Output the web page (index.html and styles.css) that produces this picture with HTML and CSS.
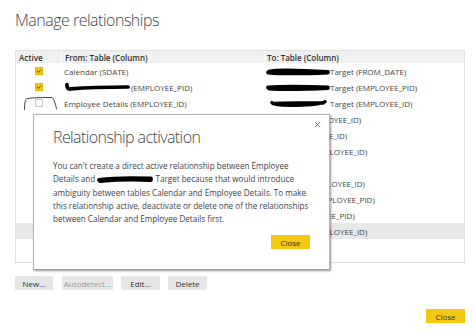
FILE: index.html
```html
<!DOCTYPE html>
<html>
<head>
<meta charset="utf-8">
<link rel="stylesheet" href="styles.css">
</head>
<body>
<div class="page">
  <h1 class="title">Manage relationships</h1>
  <div class="table">
    <div class="row head">
      <div class="c-active">Active</div>
      <div class="c-from">From: Table (Column)</div>
      <div class="c-to">To: Table (Column)</div>
    </div>
    <div class="row">
      <div class="c-active"><span class="cb on"><svg viewBox="0 0 8 8"><path d="M1.6 4.2 L3.3 5.8 L6.4 2.2" /></svg></span></div>
      <div class="c-from">Calendar (SDATE)</div>
      <div class="c-to"><span class="redact r-to"><svg viewBox="0 0 64 8"><path d="M3 4 C12 2 30 2.5 62 4.5 M2 5 C20 6.5 40 6 62 5" /></svg></span>Target (FROM_DATE)</div>
    </div>
    <div class="row">
      <div class="c-active"><span class="cb on"><svg viewBox="0 0 8 8"><path d="M1.6 4.2 L3.3 5.8 L6.4 2.2" /></svg></span></div>
      <div class="c-from"><span class="redact r-from"><svg viewBox="0 0 68 10"><path d="M3 2.5 C3 6 4 7.5 7 7 C25 5.5 45 5 66 5" /></svg></span>(EMPLOYEE_PID)</div>
      <div class="c-to"><span class="redact r-to"><svg viewBox="0 0 64 8"><path d="M2 4 C20 2.5 40 3 62 4 M3 5 C20 6 40 5.5 62 4.5" /></svg></span>Target (EMPLOYEE_PID)</div>
    </div>
    <div class="row">
      <div class="c-active"><span class="cb"></span><svg class="circle" viewBox="0 0 36 15"><path d="M1.5 14 C1.5 9 2 4 4 2.5 C10 1.5 22 1 30 1.5 C32 3 34 10 34.5 13.5" /></svg></div>
      <div class="c-from">Employee Details (EMPLOYEE_ID)</div>
      <div class="c-to"><span class="redact r-to"><svg viewBox="0 0 64 10"><path d="M3 4 C6 7 14 7.5 30 7 C45 6.5 58 5 62 3 M4 5 C20 4 40 4.5 60 4.5" /></svg></span>Target (EMPLOYEE_ID)</div>
    </div>
    <div class="row"><div class="c-active"></div><div class="c-from">Employee Details (EMPLOYEE_ID)</div><div class="c-to">Employee (EMPLOYEE_ID)</div></div>
    <div class="row"><div class="c-active"></div><div class="c-from">Employee Details (EMPLOYEE_ID)</div><div class="c-to">Salary (EMPLOYEE_ID)</div></div>
    <div class="row"><div class="c-active"></div><div class="c-from">Employee Details (EMPLOYEE_ID)</div><div class="c-to">Attendance (EMPLOYEE_ID)</div></div>
    <div class="row"><div class="c-active"></div><div class="c-from">Calendar (DATE)</div><div class="c-to">Date (DATE)</div></div>
    <div class="row"><div class="c-active"></div><div class="c-from">Employee Details (EMPLOYEE_ID)</div><div class="c-to">Employees (EMPLOYEE_ID)</div></div>
    <div class="row"><div class="c-active"></div><div class="c-from">Employee Details (EMPLOYEE_PID)</div><div class="c-to">Department (EMPLOYEE_PID)</div></div>
    <div class="row"><div class="c-active"></div><div class="c-from">Employee Details (EMPLOYEE_PID)</div><div class="c-to">Payroll (EMPLOYEE_PID)</div></div>
    <div class="row sel"><div class="c-active"></div><div class="c-from">Employee Details (EMPLOYEE_ID)</div><div class="c-to">Attendance (EMPLOYEE_ID)</div></div>
    <div class="row"><div class="c-active"></div><div class="c-from"></div><div class="c-to"></div></div>
  </div>
  <div class="actions">
    <button class="btn w-new">New...</button>
    <button class="btn w-auto disabled">Autodetect...</button>
    <button class="btn w-edit">Edit...</button>
    <button class="btn w-del">Delete</button>
  </div>
  <div class="footer">
    <button class="btn primary">Close</button>
  </div>
</div>

<div class="dialog">
  <svg class="x" viewBox="0 0 8 8"><path d="M1 1 L7 7 M7 1 L1 7" /></svg>
  <h2 class="d-title">Relationship activation</h2>
  <p class="d-text">You can't create a direct active relationship between Employee<br>Details and <span class="redact r-text"><svg viewBox="0 0 56 8"><path d="M2 5 C12 3.5 30 2.5 54 3.5 M3 6 C20 4.5 40 4.5 54 5" /></svg></span> Target because that would introduce<br>ambiguity between tables Calendar and Employee Details. To make<br>this relationship active, deactivate or delete one of the relationships<br>between Calendar and Employee Details first.</p>
  <div class="d-actions"><button class="btn primary">Close</button></div>
</div>
</body>
</html>
```

FILE: styles.css
```css
* { box-sizing: border-box; }
html, body { margin: 0; padding: 0; background: #fff; }
body {
  width: 474px;
  height: 336px;
  overflow: hidden;
  position: relative;
  font-family: "Open Sans", "Noto Sans", sans-serif;
  color: #333;
}
.page {
  padding: 8px 9px 0 15px;
}
.title {
  margin: 0;
  font-weight: 300;
  font-size: 16px;
  line-height: 24px;
  color: #444;
  letter-spacing: -0.5px;
}
.table {
  margin-top: 18px;
  width: 450px;
  height: 213px;
  border: 1px solid #e3e3e3;
  font-size: 8px;
  color: #444;
}
.row {
  display: flex;
  height: 16px;
  align-items: center;
  white-space: nowrap;
}
.row.head {
  height: 12px;
  background: #f0f0f0;
  font-weight: 600;
  color: #333;
}
.row.head > div + div { border-left: 1px solid #fff; }
.row.sel { background: #e8e8e8; }
.c-active {
  width: 45px;
  flex: none;
  height: 100%;
  display: flex;
  align-items: center;
  justify-content: center;
  position: relative;
}
.row.head .c-active { justify-content: flex-start; padding-left: 3px; }
.c-from {
  width: 203px;
  flex: none;
  height: 100%;
  display: flex;
  align-items: center;
  padding-left: 3px;
}
.c-to {
  flex: 1;
  height: 100%;
  display: flex;
  align-items: center;
  padding-left: 2px;
}
.cb {
  width: 8px;
  height: 8px;
  border: 1px solid #c8c8c8;
  background: #fff;
  display: block;
}
.cb.on {
  background: #f2c811;
  border-color: #e4b800;
}
.cb svg { display: block; width: 6px; height: 6px; }
.cb svg path { fill: none; stroke: #3b3000; stroke-width: 1.3; }
.circle {
  position: absolute;
  left: 7px;
  top: 1px;
  width: 35px;
  height: 15px;
}
.circle path { fill: none; stroke: #222; stroke-width: 0.9; }
.redact { display: inline-block; flex: none; }
.redact svg { display: block; width: 100%; height: 100%; }
.redact path { fill: none; stroke: #000; stroke-width: 3.8; stroke-linecap: round; }
.r-to { width: 64px; height: 9px; }
.r-from { width: 66px; height: 10px; margin-right: 1px; }
.r-text { width: 56px; height: 8px; vertical-align: -1px; }

.actions {
  display: flex;
  gap: 8px;
  margin-top: 13px;
}
.btn {
  font-family: inherit;
  font-size: 8px;
  height: 14px;
  padding: 0;
  border: none;
  background: #e6e6e6;
  color: #333;
}
.btn.disabled { color: #999; }
.w-new { width: 38px; }
.w-auto { width: 51px; margin-left: 1px; }
.w-edit { width: 39px; }
.w-del { width: 39px; }
.btn.primary { background: #f2c811; width: 39px; color: #333; }
.footer {
  display: flex;
  justify-content: flex-end;
  margin-top: 19px;
}

.dialog {
  position: absolute;
  left: 33px;
  top: 114px;
  width: 297px;
  height: 156px;
  background: #fff;
  border: 1px solid #b5b5b5;
  border-bottom-color: #999;
  box-shadow: 1px 1px 2px rgba(0,0,0,0.4);
  padding: 11px 0 0 19px;
}
.x {
  position: absolute;
  right: 8px;
  top: 6px;
  width: 7px;
  height: 7px;
}
.x path { stroke: #555; stroke-width: 0.9; fill: none; }
.d-title {
  margin: 0;
  font-weight: 300;
  font-size: 16px;
  line-height: 22px;
  color: #444;
  letter-spacing: -0.6px;
}
.d-text {
  margin: 11px 0 0 0;
  font-size: 8.1px;
  line-height: 13.3px;
  white-space: nowrap;
  color: #444;
}
.d-actions {
  display: flex;
  justify-content: flex-end;
  padding-right: 19px;
  margin-top: 10px;
}
```
